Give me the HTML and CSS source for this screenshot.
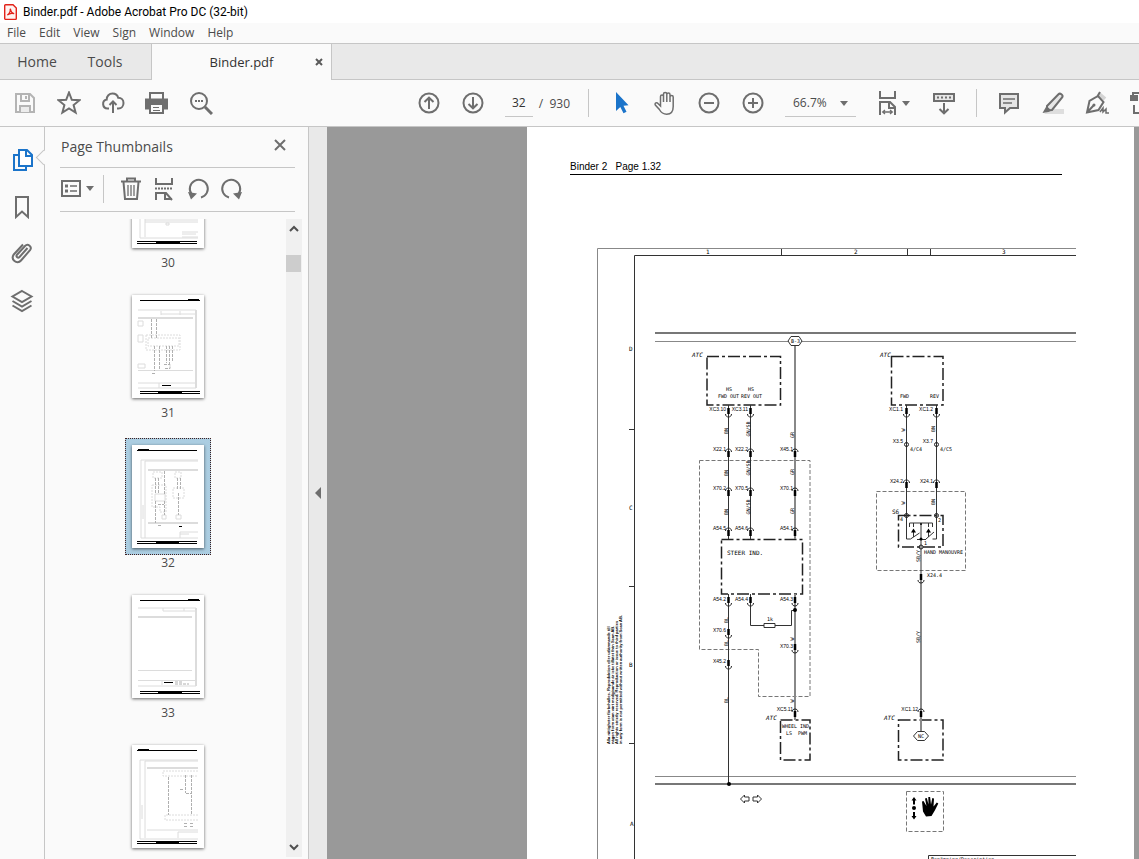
FILE: index.html
```html
<!DOCTYPE html>
<html lang="en">
<head>
    <meta charset="UTF-8">
    <meta name="viewport" content="width=device-width, initial-scale=1.0">
    <title>Binder.pdf - Adobe Acrobat Pro DC (32-bit)</title>
    <link rel="stylesheet" href="styles.css">
</head>
<body>
    <header class="titlebar">
        <svg class="app-icon" width="13" height="16" viewBox="0 0 13 16">
            <path d="M1.5.7H9L12.3 4v10.4a1 1 0 0 1-1 1H1.7a1 1 0 0 1-1-1V1.5a.8.8 0 0 1 .8-.8z" fill="#fff4f2" stroke="#e2231a" stroke-width="1.4"/>
            <path d="M3.300 11c1.500-.7 3.100-3.500 3-6.300.5 3 1.900 4.700 3.900 5-2.400-.7-4.800-.3-6.900 1.300z" fill="none" stroke="#e2231a" stroke-width="1.300"/>
        </svg>
        <span>Binder.pdf - Adobe Acrobat Pro DC (32-bit)</span>
    </header>

    <nav class="menubar">
        <a href="#">File</a>
        <a href="#">Edit</a>
        <a href="#">View</a>
        <a href="#">Sign</a>
        <a href="#">Window</a>
        <a href="#">Help</a>
    </nav>

    <div class="tabs">
        <button class="tab home">Home</button>
        <button class="tab tools">Tools</button>
        <div class="doc-tab">
            <span>Binder.pdf</span>
            <button class="close-tab" aria-label="Close tab">
                <svg width="8" height="8" viewBox="0 0 8 8"><path d="M1 1l6 6M7 1L1 7" stroke="#5a5a5a" stroke-width="2"/></svg>
            </button>
        </div>
    </div>

    <div class="toolbar">
        <div class="group file-tools">
            <button class="tool" aria-label="Save">
                <svg class="icon pale" viewBox="0 0 24 24"><path d="M3 3h14l4 4v14H3zM8 3v7h8V3M13 5v3"/><path d="M7 21v-6h10v6" fill="#ececec"/></svg>
            </button>
            <button class="tool" aria-label="Star">
                <svg class="icon" viewBox="0 0 24 24"><path d="M12 1.500l2.800 7.300 7.800.4-6 4.900 2 7.500-6.600-4.200-6.600 4.200 2-7.500-6-4.900 7.800-.4z"/></svg>
            </button>
            <button class="tool" aria-label="Upload">
                <svg class="icon" viewBox="0 0 24 24"><path d="M8 17.500H6.500a4.500 4.500 0 0 1-.8-8.900C5.500 5 8.300 2.500 11.500 2.500c2.700 0 5 1.600 5.700 4.300 3.200 0 5.300 2.200 5.300 5.200s-2 5.500-5 5.500H16M12 22V10.500M8.500 14l3.500-3.600 3.500 3.600"/></svg>
            </button>
            <button class="tool" aria-label="Print">
                <svg class="icon" viewBox="0 0 24 24"><path d="M5 8V2h13v6" fill="#fafafa"/><path d="M1 8.500h21v9H1z" fill="#6e6e6e"/><path d="M5 13h13v9H5z" fill="#fafafa"/><path d="M8 16.500h6M8 19.500h7" stroke-width="1"/></svg>
            </button>
            <button class="tool" aria-label="Search">
                <svg class="icon" viewBox="0 0 24 24"><circle cx="10" cy="10" r="8"/><path d="M16 16l7 7" stroke-width="3"/><path d="M6 10h2M9 10h2M12 10h2"/></svg>
            </button>
        </div>

        <div class="group page-tools">
            <button class="tool" aria-label="Previous page">
                <svg class="icon" viewBox="0 0 24 24"><circle cx="12" cy="12" r="9.500"/><path d="M12 18V7M7.500 11L12 6.700l4.500 4.300"/></svg>
            </button>
            <button class="tool" aria-label="Next page">
                <svg class="icon" viewBox="0 0 24 24"><circle cx="12" cy="12" r="9.500"/><path d="M12 6v11M7.500 13l4.500 4.300 4.500-4.300"/></svg>
            </button>
            <label class="page-number"><input type="text" value="32" aria-label="Page number"></label>
            <span class="page-total">/&nbsp; 930</span>
        </div>

        <div class="group view-tools">
            <button class="tool" aria-label="Select">
                <svg class="icon" viewBox="0 0 24 24"><path d="M7 1v19l4.300-4 3.200 6.200 3-1.500-3-5.900 5-.5z" fill="#1b74ca" stroke="none"/></svg>
            </button>
            <button class="tool" aria-label="Hand">
                <svg class="icon thin" viewBox="0 0 24 24"><path d="M7.500 14V5.500c0-2 3-2 3 0V11 3c0-2 3.300-2 3.300 0v8V3.500c0-2 3.200-2 3.200 0V11 6c0-2 3.200-2 3.200 0v9.500c0 5-2.700 7.700-6.500 7.700-4 0-5.700-1.700-7.300-4.700L2.300 14c-1-2 1.500-3 2.700-1.500L7.500 15z"/></svg>
            </button>
            <button class="tool" aria-label="Zoom out">
                <svg class="icon" viewBox="0 0 24 24"><circle cx="12" cy="12" r="9.500"/><path d="M7 12h10"/></svg>
            </button>
            <button class="tool" aria-label="Zoom in">
                <svg class="icon" viewBox="0 0 24 24"><circle cx="12" cy="12" r="9.500"/><path d="M7 12h10M12 7v10"/></svg>
            </button>
        </div>
        <label class="zoom-level">
            <select aria-label="Zoom level">
                <option>66.7%</option>
            </select>
        </label>
        <button class="tool fit-tool" aria-label="Fit width">
            <svg class="icon" viewBox="0 0 24 24"><path d="M5 0v7h15V0M5 24V11h10l5 5v8M14 11v6h6"/><path d="M8 21h9M10 19l-2.300 2 2.300 2M15 19l2.300 2-2.300 2" stroke-width="1.300"/></svg>
            <span class="caret"></span>
        </button>
        <button class="tool" aria-label="Read mode">
            <svg class="icon" viewBox="0 0 24 24"><path d="M2 3h20v7H2z" fill="#e6e6e6"/><path d="M5 6.500h2M9 6.500h2M13 6.500h2M17 6.500h2M12 12v10M7.500 18l4.500 4.300 4.500-4.300"/></svg>
        </button>
        <div class="group comment-tools">
            <button class="tool" aria-label="Comment">
                <svg class="icon" viewBox="0 0 24 24"><path d="M3 3h18v14h-8l-5 4.500V17H3z" fill="#e6e6e6"/><path d="M6 8h12M6 12h9" stroke-width="1.300"/></svg>
            </button>
            <button class="tool" aria-label="Highlight">
                <svg class="icon" viewBox="0 0 24 24"><path d="M9 18h14v5H3z" fill="#dedede" stroke="none"/><path d="M6 15L17.500 3.200c1.500-1.500 5 .6 3.800 3L11 19l-5 .5z" fill="#e6e6e6"/><path d="M5.500 15l5 4.500-3 1.500-6 1z" fill="#6e6e6e" stroke="none"/></svg>
            </button>
            <button class="tool" aria-label="Sign">
                <svg class="icon" viewBox="0 0 24 24"><path d="M14 3l6 5" stroke="#d4d4d4" stroke-width="4"/><path d="M2 21.500L4.500 10 13 5l5.500 6-5 8z M2 21.500l7-7.500M12 6l3-5"/><circle cx="9" cy="14" r="1.500" fill="#6e6e6e" stroke="none"/><path d="M15 21l3-4v4l3-3v4h3" stroke-width="1.500"/></svg>
            </button>
            <button class="tool" aria-label="More tools">
                <svg class="icon" viewBox="0 0 24 24"><path d="M4 6V2h17v20H5v-8"/><path d="M2 5h6v4H2z" fill="#6e6e6e"/></svg>
            </button>
        </div>
    </div>

    <div class="workspace">
        <aside class="rail">
            <button class="active" aria-label="Page thumbnails">
                <svg class="icon" viewBox="0 0 24 24"><path d="M9 7H4v15h12v-4"/><path d="M9 2h8l5 5v11H9zM16 2v6h6" fill="#fff"/></svg>
            </button>
            <button aria-label="Bookmarks">
                <svg class="icon" viewBox="0 0 24 24"><path d="M6 2h12v20l-6-5.500L6 22z"/></svg>
            </button>
            <button aria-label="Attachments">
                <svg class="icon" viewBox="0 0 24 24"><path d="M17.500 6l-8 9c-1.500 1.500-4-.4-2.500-2.300l8-8.700c3-3 7.500 1 5 4.200l-9 10.300c-4 4.500-11-1-7-6.300L13 2.500"/></svg>
            </button>
            <button aria-label="Layers">
                <svg class="icon" viewBox="0 0 24 24"><path d="M12 2l9.500 5.500L12 13 2.500 7.500zM2.500 12l9.500 5.500 9.500-5.500M2.500 16.500L12 22l9.500-5.500"/></svg>
            </button>
        </aside>

        <section class="panel">
            <div class="panel-head">
                <h2>Page Thumbnails</h2>
                <button aria-label="Close panel">
                    <svg width="12" height="12" viewBox="0 0 12 12"><path d="M1 1l10 10M11 1L1 11" stroke="#6e6e6e" stroke-width="2"/></svg>
                </button>
            </div>
            <div class="panel-tools">
                <button class="options" aria-label="Options">
                    <svg class="icon" viewBox="0 0 24 24"><path d="M2 4h18v15H2z"/><path d="M10 9h7M10 14h7" stroke-width="1.500"/><path d="M5 9h3M5 14h3" stroke-width="3"/></svg>
                    <span class="caret"></span>
                </button>
                <button aria-label="Delete page">
                    <svg class="icon" viewBox="0 0 24 24"><path d="M3 4.500h20M9 4V1.500h8V4M5.500 5L7 22h12l1.500-17"/><path d="M10 8v11M13 8v11M16 8v11" stroke-width="1.300"/></svg>
                </button>
                <button aria-label="Insert page">
                    <svg class="icon" viewBox="0 0 24 24"><path d="M4 1v6h16V1M4 23v-7h10l6 7M13 16v6h7"/><path d="M3 11.500h18" stroke-dasharray="2 1"/></svg>
                </button>
                <button aria-label="Rotate left">
                    <svg class="icon" viewBox="0 0 24 24"><path d="M15 20.500A9 9 0 1 0 5.500 17"/><path d="M2 15l9 1.500-6 6z" fill="#6e6e6e" stroke="none"/></svg>
                </button>
                <button aria-label="Rotate right">
                    <svg class="icon" viewBox="0 0 24 24"><path d="M9 20.500A9 9 0 1 1 18.500 17"/><path d="M22 15l-9 1.500 6 6z" fill="#6e6e6e" stroke="none"/></svg>
                </button>
            </div>
            <div class="panel-body">
                <ol class="thumbs">
                    <li>
                        <a href="#" class="thumb">
                            <svg viewBox="0 0 72 103">
                                <path class="faint" d="M8 14V93H66M13 14V92M13 75H66M13 77H66M50 87H66M50 89H64M50 92H66M34 78h3v2h-3z"/>
                                <path class="bar" d="M5 96.500h60M5 98.500h60M24 97.500h24"/>
                            </svg>
                        </a>
                        <span>30</span>
                    </li>
                    <li>
                        <a href="#" class="thumb">
                            <svg viewBox="0 0 72 103">
                                <path class="bar" d="M8 5.500h60M56 4.500h11"/>
                                <path class="faint" d="M6 15H64M29 19H64M29 16v4M48 16v4M6 22.500H61M6 23.500H61M64.500 15V93M63.500 15V93M6 75.500H61M6 93H64M6 88H64M27 88v5"/>
                                <path class="faint" d="M6 26h5v5H6zM6 40h5v7H6zM6 69h7v4H6z"/>
                                <path class="faint dash" d="M14 40h34v15H14zM16 43h31v8H16z"/>
                                <path class="wire" d="M19.500 24v19M24.500 24v19M22.500 51v25M27.500 51v24M34.500 51v17M37.500 51v20M40.500 51v16M32 69.500h6v4h-6M20 78.500h4"/>
                                <path class="bar" d="M30 90.500h9M8 96.500h60M8 98.500h60M26 97.500h24"/>
                            </svg>
                        </a>
                        <span>31</span>
                    </li>
                    <li>
                        <a href="#" class="thumb selected">
                            <svg viewBox="0 0 72 103">
                                <path class="bar" d="M5 5.500h60M6 4.500h11"/>
                                <path class="faint" d="M66 15H9V93H66M66 16H13V93M16 24.500H66M16 25.500H66M16 77.500H66M16 78.500H66M48 93v-6h18M48 89h9M11 60v14"/>
                                <path class="faint dash" d="M21 27h9v6h-9zM43 27h6v6h-6zM20 40h14v27h-6v-5h-8zM41 43h11v10H41z"/>
                                <path class="faint" d="M23 49h10v7H23zM30 70h4v4h-4zM44 70h5v4h-5z"/>
                                <path class="wire" d="M23.500 33v16M23.500 56v22M26.500 33v16M32.500 26v23M32.500 56v14M45.500 33v12M48.500 33v12M46.500 48v22M26 59.500h6"/>
                                <path class="wire" d="M26 80.500h3"/>
                                <path class="bar" d="M47 81.500h3M5 96.500h60M5 98.500h60M24 97.500h23"/>
                            </svg>
                        </a>
                        <span>32</span>
                    </li>
                    <li>
                        <a href="#" class="thumb">
                            <svg viewBox="0 0 72 103">
                                <path class="bar" d="M8 5.500h60M56 4.500h11"/>
                                <path class="faint" d="M6 13H64M31 16H64M31 13v3M52 13v3M6 21.500H60M6 22.500H60M64.500 13V91M63.500 13V91M6 75.500H60M6 85.500H64M6 91H64M30 86v4"/>
                                <path class="bar" d="M32 87.500h9M8 96.500h60M8 98.500h60M26 97.500h24"/>
                                <path class="wire" d="M43 87h8M43 89h14"/>
                            </svg>
                        </a>
                        <span>33</span>
                    </li>
                    <li>
                        <a href="#" class="thumb" aria-label="34">
                            <svg viewBox="0 0 72 103">
                                <path class="bar" d="M5 5.500h60M6 4.500h11"/>
                                <path class="faint" d="M66 15H8V94H66M66 16H13V93M15 22.500H66M15 23.500H66M15 85H66M46 93v-6h20M10 60v14"/>
                                <path class="faint dash" d="M66 26H31v5H66M66 70H33v5h33"/>
                                <path class="wire" d="M36.500 32v38M53.500 30v18M59.500 30v40M54 48.500h6M48 44.500h3M52 78.500h3M58 78.500h3M52 81.500h3M58 81.500h3"/>
                                <path class="bar" d="M5 96.500h60M5 98.500h60M24 97.500h23"/>
                            </svg>
                        </a>
                    </li>
                </ol>
                <div class="scrollbar">
                    <svg width="10" height="7" viewBox="0 0 10 7"><path d="M1 6l4-4 4 4" fill="none" stroke="#505050" stroke-width="2"/></svg>
                    <span class="scroll-handle"></span>
                    <svg width="10" height="7" viewBox="0 0 10 7"><path d="M1 1l4 4 4-4" fill="none" stroke="#505050" stroke-width="2"/></svg>
                </div>
            </div>
        </section>

        <button class="splitter" aria-label="Collapse panel"></button>

        <main class="viewer">
            <article class="page">
                <p class="page-head">Binder 2 &nbsp; Page 1.32</p>
                <svg class="drawing" viewBox="527 175 607 684">
                    <defs>
                        <!-- pin above socket -->
                        <g id="down">
                            <path d="M0-8v6" stroke="#000" stroke-width="2.500"/>
                            <path d="M-3-2c0 4 6 4 6 0" fill="none" stroke="#222"/>
                        </g>
                        <!-- socket above pin -->
                        <g id="up">
                            <path d="M0 2v6" stroke="#000" stroke-width="2.500"/>
                            <path d="M-3 3c0-4 6-4 6 0" fill="none" stroke="#222"/>
                        </g>
                    </defs>

                    <!-- sheet frame -->
                    <path class="line soft" d="M1076 248.500H597.500V859"/>
                    <path class="line" d="M1076 255.500H634.500V859M781.500 249v6M907.500 249v6M930.500 249v6M629 429.500h5M629 586.500h5M629 743.500h5"/>
                    <g class="mark">
                        <text x="706" y="254">1</text>
                        <text x="854" y="254">2</text>
                        <text x="1002" y="254">3</text>
                        <text x="629" y="351">D</text>
                        <text x="629" y="510">C</text>
                        <text x="629" y="667">B</text>
                        <text x="630" y="826">A</text>
                    </g>
                    <g class="notice" transform="rotate(-90 610 744)">
                        <text x="610" y="744">Alla rättigheter förbehålles. Reproduktion eller utlämnande till</text>
                        <text x="610" y="748">någon form utan vårt medgivande är icke tillåtet från Scan AB.</text>
                        <text x="610" y="752">All rights strictly reserved. Reproduction or issue to third parties</text>
                        <text x="610" y="756">in any form is not permitted without written authority from Scan AB.</text>
                    </g>

                    <!-- supply rails -->
                    <path d="M655 333h421M655 784h421" stroke="#777" stroke-width="2"/>
                    <path class="line soft" d="M655 341.500h421M655 776.500h421"/>

                    <!-- component boxes -->
                    <path class="unit" d="M707 356.500h73.500V405H707zM721.500 539.500h81V594h-81zM780.500 720h29.500v40h-29.500zM891.500 356.500H943V405h-51.500zM898.500 515.500H943V547h-44.500zM898.500 720H943v40h-44.500z"/>
                    <path class="option" d="M699.500 460.500h110.500v236h-51.500V649.500h-59zM876.500 491.500h89v79h-89zM906.500 791.500h37v40h-37z"/>

                    <!-- steering indicator wires -->
                    <path class="line" d="M728.500 405v134M750.500 405v134M728.500 594v190M750.500 594v31.500H764M775 625.500h16.500V610.500h4M764 623.500h11v4h-11z"/>
                    <path class="line soft wide" d="M795 346v193M795 594v126"/>
                    <path class="line" d="M788 341l3-4.500h8l3 4.500-3 4.500h-8z" fill="#fff"/>
                    <circle cx="795" cy="610" r="2"/>
                    <circle cx="729" cy="784" r="2"/>

                    <use href="#down" x="728.500" y="416"/>
                    <use href="#down" x="750.500" y="416"/>
                    <use href="#up" x="728.500" y="449"/>
                    <use href="#up" x="750.500" y="449"/>
                    <use href="#up" x="795" y="449"/>
                    <use href="#up" x="728.500" y="488"/>
                    <use href="#up" x="750.500" y="488"/>
                    <use href="#up" x="795" y="488"/>
                    <use href="#up" x="728.500" y="528"/>
                    <use href="#up" x="750.500" y="528"/>
                    <use href="#up" x="795" y="528"/>
                    <use href="#down" x="728.500" y="605"/>
                    <use href="#down" x="750.500" y="605"/>
                    <use href="#down" x="795" y="605"/>
                    <use href="#down" x="728.500" y="637"/>
                    <use href="#down" x="728.500" y="668"/>
                    <use href="#down" x="795" y="652"/>
                    <use href="#up" x="795" y="709"/>

                    <!-- hand manoeuvre wires -->
                    <path class="line" d="M906.500 405v134h4l9-6M936.500 405v134h-4M926 539l8-7M917 539.500h9M921 524v23M909.500 527v-4h23v4M913.500 523v4M928.500 523v4M921 547v27M913.500 531v6M928.500 531v6"/>
                    <path class="line soft wide" d="M921 574v157"/>
                    <path d="M911 532.500l2.500-4 2.500 4zM926 532.500l2.500-4 2.500 4z"/>
                    <circle cx="921" cy="539" r="1.500"/>
                    <circle cx="921" cy="524" r="1"/>
                    <circle class="ring" cx="906.500" cy="444.500" r="2"/>
                    <circle class="ring" cx="936.500" cy="444.500" r="2"/>
                    <circle class="ring" cx="906.500" cy="515.500" r="2"/>
                    <circle class="ring" cx="936.500" cy="515.500" r="2"/>
                    <circle class="ring" cx="921" cy="547" r="2"/>
                    <path class="line" d="M913.500 736l4-4.500h7l4 4.500-4 4.500h-7z" fill="#fff"/>
                    <use href="#down" x="906.500" y="416"/>
                    <use href="#down" x="936.500" y="416"/>
                    <use href="#up" x="906.500" y="480"/>
                    <use href="#up" x="936.500" y="480"/>
                    <use href="#down" x="921" y="582"/>
                    <use href="#up" x="921" y="709"/>

                    <g class="name">
                        <text x="692" y="357">ATC</text>
                        <text x="880" y="357">ATC</text>
                        <text x="766" y="720">ATC</text>
                        <text x="884" y="720">ATC</text>
                    </g>
                    <text class="title" x="727" y="555">STEER IND.</text>
                    <text class="title" x="892" y="514">S6</text>

                    <g class="label">
                        <text x="726" y="391">HS</text>
                        <text x="748" y="391">HS</text>
                        <text x="718" y="398">FWD OUT</text>
                        <text x="741" y="398">REV OUT</text>
                        <text x="782" y="728">WHEEL IND</text>
                        <text x="786" y="735">LS &nbsp;PWM</text>
                        <text x="900" y="398">FWD</text>
                        <text x="930" y="398">REV</text>
                        <text x="910" y="451">4/C4</text>
                        <text x="940" y="451">4/C5</text>
                        <text x="927" y="577">X24.4</text>
                        <text x="924" y="554">HAND MANOUVRE</text>
                        <text x="900" y="521">4</text>
                        <text x="938" y="522">2</text>
                        <text x="924" y="545">1</text>
                        <text x="791" y="343">B-3</text>
                        <text x="918" y="738">NC</text>
                        <text x="767" y="621">1k</text>
                    </g>
                    <g class="label end">
                        <text x="726" y="411">XC3.10</text>
                        <text x="748" y="411">XC3.11</text>
                        <text x="726" y="451">X22.1</text>
                        <text x="748" y="451">X22.2</text>
                        <text x="793" y="451">X45.1</text>
                        <text x="726" y="490">X70.2</text>
                        <text x="748" y="490">X70.5</text>
                        <text x="793" y="490">X70.1</text>
                        <text x="726" y="530">A54.5</text>
                        <text x="748" y="530">A54.6</text>
                        <text x="793" y="530">A54.1</text>
                        <text x="726" y="601">A54.2</text>
                        <text x="748" y="601">A54.4</text>
                        <text x="793" y="601">A54.3</text>
                        <text x="726" y="632">X70.6</text>
                        <text x="726" y="663">X45.2</text>
                        <text x="793" y="648">X70.3</text>
                        <text x="793" y="711">XC5.11</text>
                        <text x="903" y="411">XC1.1</text>
                        <text x="933" y="411">XC1.2</text>
                        <text x="903" y="443">X3.5</text>
                        <text x="933" y="443">X3.7</text>
                        <text x="903" y="483">X24.2</text>
                        <text x="933" y="483">X24.1</text>
                        <text x="918" y="711">XC1.12</text>
                    </g>
                    <!-- wire colours, read upwards along the wire -->
                    <g class="label turned">
                        <text transform="translate(728 431) rotate(-90)">BN</text>
                        <text transform="translate(728 473) rotate(-90)">BN</text>
                        <text transform="translate(728 512) rotate(-90)">BN</text>
                        <text transform="translate(750 429) rotate(-90)">GN/SB</text>
                        <text transform="translate(750 468) rotate(-90)">GN/SB</text>
                        <text transform="translate(750 507) rotate(-90)">GN/SB</text>
                        <text transform="translate(794 435) rotate(-90)">GR</text>
                        <text transform="translate(794 472) rotate(-90)">GR</text>
                        <text transform="translate(794 511) rotate(-90)">GR</text>
                        <text transform="translate(728 620) rotate(-90)">BL</text>
                        <text transform="translate(728 643) rotate(-90)">BL</text>
                        <text transform="translate(728 700) rotate(-90)">BL</text>
                        <text transform="translate(794 639) rotate(-90)">W</text>
                        <text transform="translate(794 701) rotate(-90)">W</text>
                        <text transform="translate(905 430) rotate(-90)">W</text>
                        <text transform="translate(905 503) rotate(-90)">W</text>
                        <text transform="translate(935 429) rotate(-90)">BN</text>
                        <text transform="translate(935 502) rotate(-90)">BN</text>
                        <text transform="translate(920 556) rotate(-90)">SB/Y</text>
                        <text transform="translate(920 637) rotate(-90)">SB/Y</text>
                    </g>

                    <!-- function symbols -->
                    <path class="line" d="M740.500 799l4-4v2h4.500v4h-4.500v2zM761.500 799l-4-4v2h-4.500v4h4.500v2z"/>
                    <path d="M914 797l2.500 3.500h-1.500v4h-2v-4h-1.500zM914 819.500l2.500-3.500h-1.500v-4h-2v4h-1.500z"/>
                    <circle cx="914" cy="808" r="2"/>
                    <path d="M922 801.500l1.500-.5 3 5-1.500-7.500 1.800-.4 1.700 6.400-.2-7.500h1.800l.9 7.500 1.300-6.500 1.700.4-.5 8.100 3.300-4 1.500 1-3.500 7-3.300 5.500-5.500.5-3-5z"/>

                    <path class="line" d="M1076 855.500H928.500V862"/>
                    <text class="label" x="931" y="861">Benämning/Description</text>
                </svg>
            </article>
        </main>
    </div>
</body>
</html>
```
FILE: styles.css
```css
* {
    box-sizing: border-box;
}

body {
    margin: 0;
    height: 100vh;
    display: flex;
    flex-direction: column;
    overflow: hidden;
    font-family: "Open Sans", "Noto Sans", sans-serif;
    font-size: 12px;
    color: #4b4b4b;
    background-color: #fafafa;
}

button {
    padding: 0;
    border: none;
    background: none;
    font: inherit;
    color: inherit;
    cursor: pointer;
}

a {
    color: inherit;
    text-decoration: none;
}

.icon {
    display: block;
    width: 24px;
    height: 24px;
    fill: none;
    stroke: #6e6e6e;
    stroke-width: 2;
}

.icon.pale {
    stroke: #b4b4b4;
}

.icon.thin {
    stroke-width: 1.5;
}

.caret {
    border: 4px solid transparent;
    border-top: 5px solid #6e6e6e;
    border-bottom: none;
}

/* Window title and menus */
.titlebar {
    flex: none;
    display: flex;
    align-items: center;
    gap: 6px;
    height: 23px;
    padding-left: 4px;
    background-color: #fff;
    font-family: Roboto, "Open Sans", sans-serif;
    color: #000;
}

.menubar {
    flex: none;
    display: flex;
    gap: 13px;
    height: 20px;
    padding-left: 7px;
    line-height: 20px;
}

/* Tabs */
.tabs {
    flex: none;
    display: flex;
    height: 37px;
    background-color: #e9e9e9;
    border-top: 1px solid #c6c6c6;
    border-bottom: 1px solid #c6c6c6;
}

.tab {
    font-size: 14px;
}

.tab.home {
    width: 74px;
}

.tab.tools {
    width: 62px;
}

.doc-tab {
    display: flex;
    align-items: center;
    justify-content: center;
    position: relative;
    width: 181px;
    height: 36px;
    margin-left: 15px;
    border: solid #c6c6c6;
    border-width: 0 1px;
    background-color: #fafafa;
    font-size: 13px;
    color: #323232;
}

.close-tab {
    position: absolute;
    right: 8px;
    line-height: 0;
}

/* Toolbar */
.toolbar {
    flex: none;
    display: flex;
    align-items: center;
    height: 47px;
    padding-left: 3px;
    border-bottom: 1px solid #c6c6c6;
    overflow: hidden;
}

.group {
    flex: none;
    display: flex;
    align-items: center;
    height: 28px;
}

.tool {
    flex: none;
    display: flex;
    align-items: center;
    justify-content: center;
    width: 44px;
    height: 28px;
}

.page-tools {
    flex: 0 0 366px;
    justify-content: flex-end;
    padding-right: 18px;
    border-right: 1px solid #c6c6c6;
}

.page-number input {
    display: block;
    width: 28px;
    height: 28px;
    margin: 0 6px 0 10px;
    padding: 0;
    border: none;
    border-bottom: 1px solid #c6c6c6;
    background: none;
    font: inherit;
    color: #323232;
    text-align: center;
}

.view-tools {
    margin-left: 10px;
}

.zoom-level {
    flex: none;
    position: relative;
    margin: 0 9px 0 10px;
}

.zoom-level select {
    appearance: none;
    display: block;
    width: 71px;
    height: 28px;
    padding: 0 8px;
    border: none;
    border-bottom: 1px solid #c6c6c6;
    border-radius: 0;
    background: none;
    font: inherit;
    color: #4b4b4b;
}

.zoom-level::after {
    content: "";
    position: absolute;
    right: 8px;
    top: 12px;
    border: 4px solid transparent;
    border-top: 5px solid #6e6e6e;
    border-bottom: none;
}

.fit-tool {
    width: 57px;
    justify-content: flex-start;
    padding-left: 10px;
    gap: 3px;
}

.comment-tools {
    margin-left: 10px;
    padding-left: 10px;
    border-left: 1px solid #c6c6c6;
}

/* Main area */
.workspace {
    flex: 1;
    display: flex;
    min-height: 0;
}

.rail {
    flex: none;
    display: flex;
    flex-direction: column;
    align-items: center;
    gap: 23px;
    width: 45px;
    padding-top: 21px;
    border-right: 1px solid #c6c6c6;
}

.rail button {
    position: relative;
}

.rail .active .icon {
    stroke: #1b74ca;
}

.rail .active::after {
    content: "";
    position: absolute;
    right: -15px;
    top: 4px;
    width: 10px;
    height: 10px;
    background-color: #fafafa;
    border: solid #c6c6c6;
    border-width: 0 0 1px 1px;
    transform: rotate(45deg);
}

.panel {
    flex: none;
    display: flex;
    flex-direction: column;
    width: 264px;
    border-right: 1px solid #c6c6c6;
}

.panel-head {
    display: flex;
    align-items: center;
    justify-content: space-between;
    height: 41px;
    margin: 0 13px 0 15px;
    padding: 0 9px 2px 1px;
    border-bottom: 1px solid #c6c6c6;
}

.panel-head h2 {
    margin: 0;
    font-size: 14px;
    font-weight: normal;
}

.panel-tools {
    display: flex;
    align-items: center;
    gap: 10px;
    height: 44px;
    margin: 0 13px 0 15px;
    padding-bottom: 2px;
    border-bottom: 1px solid #c6c6c6;
}

.panel-tools .options {
    display: flex;
    align-items: center;
    gap: 2px;
    height: 28px;
    margin-right: 4px;
    padding-right: 9px;
    border-right: 1px solid #c6c6c6;
}

.panel-body {
    flex: 1;
    display: flex;
    min-height: 0;
    padding: 7px 6px 2px 5px;
}

.thumbs {
    flex: 1;
    display: flex;
    flex-direction: column;
    align-items: center;
    margin: 0;
    padding: 0;
    list-style: none;
    overflow: hidden;
}

.thumbs li {
    flex: none;
    height: 150px;
    text-align: center;
    line-height: 16px;
}

/* list is scrolled part of the way into page 30 */
.thumbs li:first-child {
    margin-top: -81px;
}

.thumb {
    display: block;
    width: 86px;
    height: 117px;
    padding: 6px;
    border: 1px solid transparent;
}

.thumb.selected {
    background-color: #abcde1;
    border: 1px dotted #402020;
}

.thumb svg {
    display: block;
    width: 72px;
    height: 103px;
    background-color: #fff;
    box-shadow: 0 1px 3px rgba(0, 0, 0, 0.6);
    fill: none;
}

.thumb .bar {
    stroke: #000;
}

.thumb .faint {
    stroke: #dcdcdc;
}

.thumb .dash {
    stroke-dasharray: 2 1;
}

.thumb .wire {
    stroke: #b0b0b0;
    stroke-dasharray: 3 1;
}

.scrollbar {
    flex: none;
    display: flex;
    flex-direction: column;
    align-items: center;
    width: 16px;
    padding: 6px 1px 6px 0;
    background-color: #f0f0f0;
}

.scroll-handle {
    width: 15px;
    height: 17px;
    margin: 23px 0 auto;
    background-color: #cdcdcd;
}

.splitter {
    flex: none;
    display: flex;
    align-items: center;
    justify-content: center;
    width: 18px;
    background-color: #e9e9e9;
}

.splitter::before {
    content: "";
    border: 6px solid transparent;
    border-right-color: #6e6e6e;
    border-left: none;
}

.viewer {
    flex: 1;
    min-width: 0;
    background-color: #999;
    overflow: hidden;
}

/* PDF page */
.page {
    width: 607px;
    min-height: 100%;
    margin: 0 5px 0 auto;
    padding-top: 33px;
    background-color: #fff;
}

.page-head {
    margin: 0 72px 0 43px;
    border-bottom: 1px solid #000;
    font-family: "Liberation Sans", Arial, sans-serif;
    font-size: 10px;
    line-height: 14px;
    color: #000;
}

.drawing {
    display: block;
    width: 100%;
    font-family: "DejaVu Sans Mono", monospace;
}

.drawing .line {
    fill: none;
    stroke: #333;
}

.drawing .line[fill] {
    fill: #fff;
}

.drawing .soft {
    stroke: #888;
}

.drawing .wide {
    stroke-width: 2;
}

.drawing .unit {
    fill: none;
    stroke: #222;
    stroke-width: 1.5;
    stroke-dasharray: 12 3 3 3;
}

.drawing .option {
    fill: none;
    stroke: #777;
    stroke-dasharray: 4 2;
}

.drawing .ring {
    fill: none;
    stroke: #222;
}

.drawing .label {
    font-size: 5px;
}

.drawing .end {
    font-family: "Liberation Sans", Arial, sans-serif;
    text-anchor: end;
}

.drawing .turned {
    text-anchor: middle;
}

.drawing .title {
    font-size: 6px;
}

.drawing .name {
    font-size: 6px;
    font-style: italic;
}

.drawing .mark {
    font-size: 6px;
}

.drawing .notice {
    font-family: "Liberation Sans", Arial, sans-serif;
    font-size: 4px;
    font-weight: bold;
}
```
